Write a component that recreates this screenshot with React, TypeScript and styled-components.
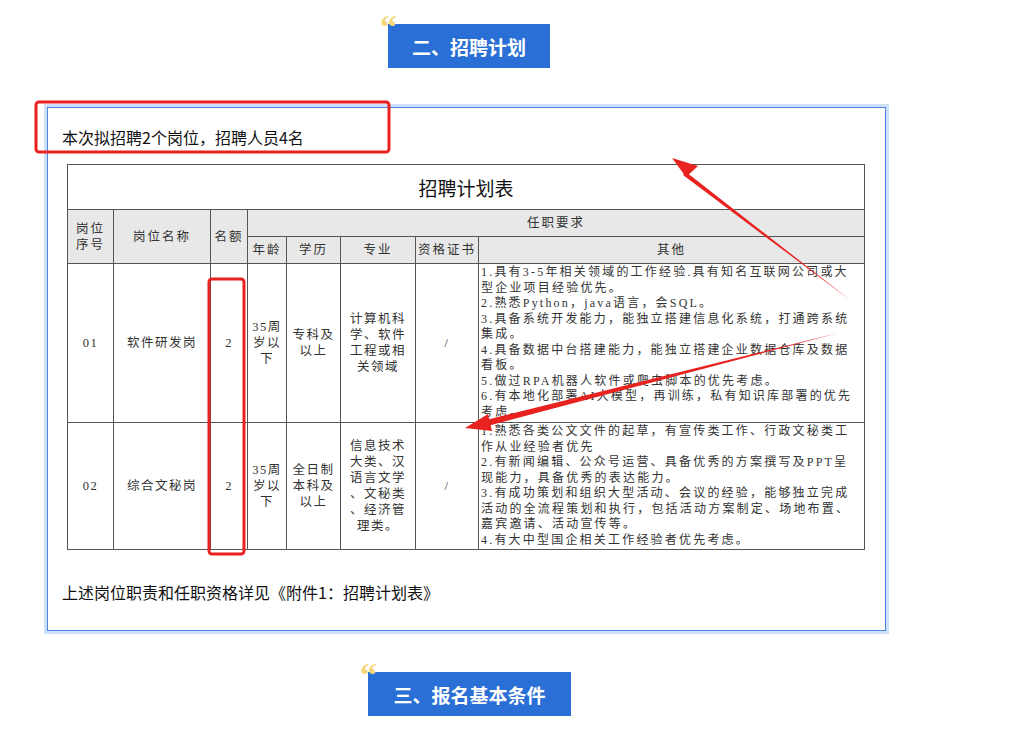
import React from 'react'
import styled, { createGlobalStyle } from 'styled-components'

const Global = createGlobalStyle`
  body { margin: 0; background: #fff; font-family: "Noto Sans CJK SC", "Noto Sans", sans-serif; }
`

const Page = styled.div`
  position: relative;
  width: 1030px;
  height: 741px;
  padding-top: 24px;
  box-sizing: border-box;
  overflow: hidden;
`

const HeadWrap = styled.div<{ $ml: number }>`
  position: relative;
  margin-left: ${p => p.$ml}px;
  display: inline-block;
`

const Quote = styled.span`
  position: absolute;
  left: -8px;
  top: -14px;
  color: #f4d77a;
  font-family: "Liberation Serif", serif;
  font-size: 34px;
  font-weight: bold;
  line-height: 1;
`

const Heading = styled.div<{ $w: number }>`
  width: ${p => p.$w}px;
  height: 44px;
  background: #2a6fd6;
  color: #fff;
  font-size: 19px;
  font-weight: bold;
  display: flex;
  align-items: center;
  justify-content: center;
`

const Panel = styled.div`
  margin: 36px 0 0 44px;
  width: 845px;
  height: 530px;
  box-sizing: border-box;
  border: 3px solid #cfe0fb;
  outline: 1px solid #4a86e8;
  outline-offset: -4px;
  padding: 15px 20px 0 15px;
`

const Lead = styled.div`
  font-size: 16px;
  color: #111;
  height: 30px;
  line-height: 30px;
`

const Table = styled.table`
  margin: 12px 0 0 5px;
  width: 798px;
  border-collapse: collapse;
  font-family: "Liberation Serif", "Noto Sans CJK SC", serif;
  color: #333;
  font-size: 12.5px;
  td, th { border: 1.5px solid #555; padding: 0; text-align: center; font-weight: normal; }
`

const Title = styled.th`
  height: 44px;
  font-size: 19px;
  font-family: "Noto Sans CJK SC", sans-serif;
  color: #111;
`

const Hd = styled.th`
  background: #e8e8e8;
  letter-spacing: 2px;
  height: 26px;
  line-height: 16px;
`

const Cell = styled.td<{ $h: number }>`
  height: ${p => p.$h}px;
  line-height: 16px;
  letter-spacing: 1.5px;
`

const Other = styled.td`
  text-align: left !important;
  vertical-align: top;
  padding: 1px 2px !important;
  line-height: 15.5px;
  letter-spacing: 2.2px;
  font-size: 12px;
`

const Foot = styled.div`
  margin-top: 30px;
  font-size: 16px;
  color: #111;
`

const Overlay = styled.svg`
  position: absolute;
  left: 0;
  top: 0;
  pointer-events: none;
`

const req1 = [
  '1.具有3-5年相关领域的工作经验.具有知名互联网公司或大型企业项目经验优先。',
  '2.熟悉Python，java语言，会SQL。',
  '3.具备系统开发能力，能独立搭建信息化系统，打通跨系统集成。',
  '4.具备数据中台搭建能力，能独立搭建企业数据仓库及数据看板。',
  '5.做过RPA机器人软件或爬虫脚本的优先考虑。',
  '6.有本地化部署AI大模型，再训练，私有知识库部署的优先考虑。',
]
const req2 = [
  '1.熟悉各类公文文件的起草，有宣传类工作、行政文秘类工作从业经验者优先',
  '2.有新闻编辑、公众号运营、具备优秀的方案撰写及PPT呈现能力，具备优秀的表达能力。',
  '3.有成功策划和组织大型活动、会议的经验，能够独立完成活动的全流程策划和执行，包括活动方案制定、场地布置、嘉宾邀请、活动宣传等。',
  '4.有大中型国企相关工作经验者优先考虑。',
]

export default function App() {
  return (
    <Page>
      <Global />
      <HeadWrap $ml={388}>
        <Quote>“</Quote>
        <Heading $w={162}>二、招聘计划</Heading>
      </HeadWrap>
      <Panel>
        <Lead>本次拟招聘2个岗位，招聘人员4名</Lead>
        <Table>
          <colgroup>
            <col style={{ width: 46 }} /><col style={{ width: 97 }} /><col style={{ width: 37 }} />
            <col style={{ width: 39 }} /><col style={{ width: 54 }} /><col style={{ width: 75 }} />
            <col style={{ width: 63 }} /><col />
          </colgroup>
          <tbody>
            <tr><Title colSpan={8}>招聘计划表</Title></tr>
            <tr>
              <Hd rowSpan={2}>岗位<br />序号</Hd>
              <Hd rowSpan={2}>岗位名称</Hd>
              <Hd rowSpan={2}>名额</Hd>
              <Hd colSpan={5}>任职要求</Hd>
            </tr>
            <tr>
              <Hd>年龄</Hd><Hd>学历</Hd><Hd>专业</Hd><Hd>资格证书</Hd><Hd>其他</Hd>
            </tr>
            <tr>
              <Cell $h={158}>01</Cell>
              <Cell $h={158}>软件研发岗</Cell>
              <Cell $h={158}>2</Cell>
              <Cell $h={158}>35周<br />岁以<br />下</Cell>
              <Cell $h={158}>专科及<br />以上</Cell>
              <Cell $h={158}>计算机科<br />学、软件<br />工程或相<br />关领域</Cell>
              <Cell $h={158}>/</Cell>
              <Other>{req1.map(t => <div key={t}>{t}</div>)}</Other>
            </tr>
            <tr>
              <Cell $h={126}>02</Cell>
              <Cell $h={126}>综合文秘岗</Cell>
              <Cell $h={126}>2</Cell>
              <Cell $h={126}>35周<br />岁以<br />下</Cell>
              <Cell $h={126}>全日制<br />本科及<br />以上</Cell>
              <Cell $h={126}>信息技术<br />大类、汉<br />语言文学<br />、文秘类<br />、经济管<br />理类。</Cell>
              <Cell $h={126}>/</Cell>
              <Other>{req2.map(t => <div key={t}>{t}</div>)}</Other>
            </tr>
          </tbody>
        </Table>
        <Foot>上述岗位职责和任职资格详见《附件1：招聘计划表》</Foot>
      </Panel>
      <HeadWrap $ml={368} style={{ marginTop: 38 }}>
        <Quote>“</Quote>
        <Heading $w={203}>三、报名基本条件</Heading>
      </HeadWrap>
      <Overlay width={1030} height={741}>
        <rect x={36} y={102} width={353} height={50} rx={3} fill="none" stroke="#e8221f" strokeWidth={3} />
        <rect x={209} y={279} width={35} height={275} rx={3} fill="none" stroke="#e8221f" strokeWidth={3} />
        <polygon points="850,300 686,172 683,175" fill="#e8221f" />
        <polygon points="672,158 698,166 686,177" fill="#e8221f" />
        <polygon points="838,333 478,422 480,428" fill="#e8221f" />
        <polygon points="465,428 488,414 492,431" fill="#e8221f" />
      </Overlay>
    </Page>
  )
}
